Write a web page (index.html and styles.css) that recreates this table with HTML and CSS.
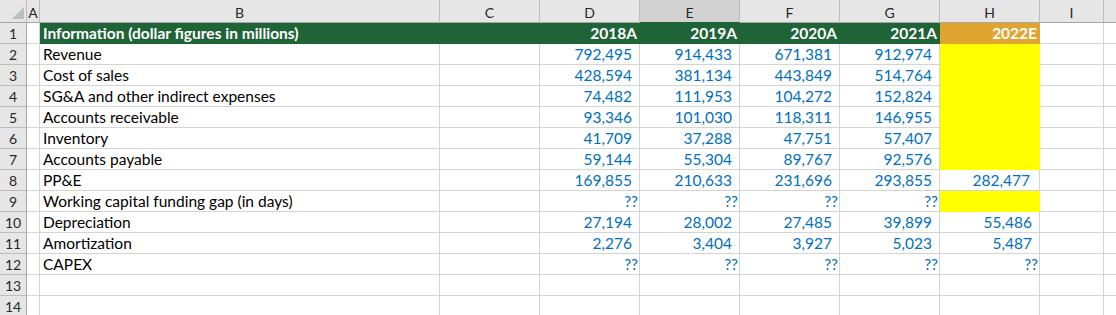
FILE: index.html
```html
<!DOCTYPE html>
<html>
<head>
<meta charset="utf-8">
<link rel="stylesheet" href="styles.css">
</head>
<body>
<div class="sheet">
  <div class="c corner"><svg class="tri" width="12" height="12" viewBox="0 0 12 12"><polygon points="12,0 12,12 0,12" fill="#BDBDBD"/></svg></div>
  <div class="c ch">A</div><div class="c ch">B</div><div class="c ch">C</div><div class="c ch">D</div><div class="c ch sel">E</div><div class="c ch">F</div><div class="c ch">G</div><div class="c ch">H</div><div class="c ch">I</div><div class="c ch last"></div>

  <div class="c rh">1</div><div class="c"></div><div class="c lbl g hd">Information (dollar figures in millions)</div><div class="c g"></div><div class="c num g hd">2018A</div><div class="c num g hd">2019A</div><div class="c num g hd">2020A</div><div class="c num g hd">2021A</div><div class="c num o hd">2022E</div><div class="c"></div><div class="c last"></div>

  <div class="c rh">2</div><div class="c"></div><div class="c lbl">Revenue</div><div class="c"></div><div class="c num">792,495</div><div class="c num">914,433</div><div class="c num">671,381</div><div class="c num">912,974</div><div class="c y"></div><div class="c"></div><div class="c last"></div>

  <div class="c rh">3</div><div class="c"></div><div class="c lbl">Cost of sales</div><div class="c"></div><div class="c num">428,594</div><div class="c num">381,134</div><div class="c num">443,849</div><div class="c num">514,764</div><div class="c y"></div><div class="c"></div><div class="c last"></div>

  <div class="c rh">4</div><div class="c"></div><div class="c lbl">SG&amp;A and other indirect expenses</div><div class="c"></div><div class="c num">74,482</div><div class="c num">111,953</div><div class="c num">104,272</div><div class="c num">152,824</div><div class="c y"></div><div class="c"></div><div class="c last"></div>

  <div class="c rh">5</div><div class="c"></div><div class="c lbl">Accounts receivable</div><div class="c"></div><div class="c num">93,346</div><div class="c num">101,030</div><div class="c num">118,311</div><div class="c num">146,955</div><div class="c y"></div><div class="c"></div><div class="c last"></div>

  <div class="c rh">6</div><div class="c"></div><div class="c lbl">Inventory</div><div class="c"></div><div class="c num">41,709</div><div class="c num">37,288</div><div class="c num">47,751</div><div class="c num">57,407</div><div class="c y"></div><div class="c"></div><div class="c last"></div>

  <div class="c rh">7</div><div class="c"></div><div class="c lbl">Accounts payable</div><div class="c"></div><div class="c num">59,144</div><div class="c num">55,304</div><div class="c num">89,767</div><div class="c num">92,576</div><div class="c y yend"></div><div class="c"></div><div class="c last"></div>

  <div class="c rh">8</div><div class="c"></div><div class="c lbl">PP&amp;E</div><div class="c"></div><div class="c num">169,855</div><div class="c num">210,633</div><div class="c num">231,696</div><div class="c num">293,855</div><div class="c num wide">282,477</div><div class="c"></div><div class="c last"></div>

  <div class="c rh">9</div><div class="c"></div><div class="c lbl">Working capital funding gap (in days)</div><div class="c"></div><div class="c num q">??</div><div class="c num q">??</div><div class="c num q">??</div><div class="c num q">??</div><div class="c y yend"></div><div class="c"></div><div class="c last"></div>

  <div class="c rh">10</div><div class="c"></div><div class="c lbl">Depreciation</div><div class="c"></div><div class="c num">27,194</div><div class="c num">28,002</div><div class="c num">27,485</div><div class="c num">39,899</div><div class="c num">55,486</div><div class="c"></div><div class="c last"></div>

  <div class="c rh">11</div><div class="c"></div><div class="c lbl">Amortization</div><div class="c"></div><div class="c num">2,276</div><div class="c num">3,404</div><div class="c num">3,927</div><div class="c num">5,023</div><div class="c num">5,487</div><div class="c"></div><div class="c last"></div>

  <div class="c rh">12</div><div class="c"></div><div class="c lbl">CAPEX</div><div class="c"></div><div class="c num q">??</div><div class="c num q">??</div><div class="c num q">??</div><div class="c num q">??</div><div class="c num q">??</div><div class="c"></div><div class="c last"></div>

  <div class="c rh">13</div><div class="c"></div><div class="c"></div><div class="c"></div><div class="c"></div><div class="c"></div><div class="c"></div><div class="c"></div><div class="c"></div><div class="c"></div><div class="c last"></div>

  <div class="c rh">14</div><div class="c"></div><div class="c"></div><div class="c"></div><div class="c"></div><div class="c"></div><div class="c"></div><div class="c"></div><div class="c"></div><div class="c"></div><div class="c last"></div>
</div>
</body>
</html>
```
FILE: styles.css
```css
html, body {
  margin: 0;
  padding: 0;
  background: #fff;
}
.sheet {
  display: grid;
  grid-template-columns: 27px 13px 400px repeat(6, 100px) 64px 1fr;
  grid-template-rows: 23px;
  grid-auto-rows: 21px;
  width: 1116px;
  font-family: "Lato", "Liberation Sans", sans-serif;
  font-size: 15.5px;
  color: #000;
  overflow: hidden;
}
.c {
  box-sizing: border-box;
  border-right: 1px solid #D4D4D4;
  border-bottom: 1px solid #D4D4D4;
  display: flex;
  align-items: flex-end;
  padding-bottom: 0;
  white-space: nowrap;
  overflow: hidden;
  line-height: 19px;
}
.last {
  border-right: none;
}
.corner {
  background: #E6E6E6;
  border-right: 1px solid #BDBDBD;
  border-bottom: 1px solid #A6A6A6;
  justify-content: flex-end;
  padding: 0 2px 3px 0;
}
.ch {
  background: #E6E6E6;
  border-right: 1px solid #BDBDBD;
  border-bottom: 1px solid #A6A6A6;
  justify-content: center;
  align-items: center;
  padding: 3px 0 0 0;
  font-size: 14px;
  color: #262626;
}
.ch.sel {
  background: #D2D2D2;
  border-bottom: 1px solid #1E6437;
}
.ch.last {
  border-right: none;
}
.rh {
  background: #E6E6E6;
  border-right: 1px solid #A6A6A6;
  border-bottom: 1px solid #BDBDBD;
  justify-content: center;
  align-items: center;
  padding: 1px 0 0 0;
  font-size: 14px;
  color: #262626;
}
.lbl {
  padding-left: 3px;
}
.num {
  justify-content: flex-end;
  padding-right: 7px;
  color: #0070C0;
}
.num.q {
  padding-right: 1px;
}
.num.wide {
  padding-right: 9px;
}
.g {
  background: #1E6437;
  border-color: #1E6437;
}
.o {
  background: #E0A52E;
  border-color: #E0A52E;
}
.hd {
  color: #fff;
  font-weight: bold;
  padding-right: 2px;
}
.lbl.hd {
  padding-right: 0;
}
.y {
  background: #FFFF00;
  border-color: #FFFF00;
}
.y.yend {
  border-bottom-color: #FFFF00;
}
```
